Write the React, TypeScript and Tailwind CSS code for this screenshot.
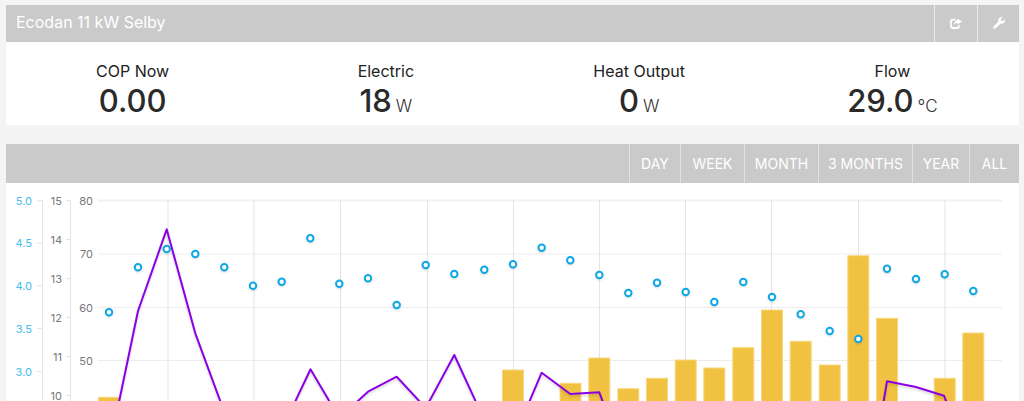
import { FaWrench } from "react-icons/fa";

const font = { fontFamily: '"Inter", "Open Sans", sans-serif' };

const stats = [
  { label: "COP Now", value: "0.00", unit: "" },
  { label: "Electric", value: "18", unit: "W" },
  { label: "Heat Output", value: "0", unit: "W" },
  { label: "Flow", value: "29.0", unit: "°C" },
];

const ranges = [
  { label: "DAY", w: "w-[51px]" },
  { label: "WEEK", w: "w-[64px]" },
  { label: "MONTH", w: "w-[74px]" },
  { label: "3 MONTHS", w: "w-[94px]" },
  { label: "YEAR", w: "w-[57px]" },
  { label: "ALL", w: "w-[50px]" },
];

const dots = [
  [109, 312.3], [138, 267.3], [166.7, 249], [195.3, 254], [224.3, 267.3], [253, 285.7],
  [281.7, 281.7], [310.3, 238.3], [339.3, 283.7], [368, 278.3], [396.7, 305], [425.7, 265],
  [454.3, 274], [484.3, 269.7], [513, 264.3], [541.7, 247.7], [570.3, 260.3], [599.3, 275],
  [628.3, 293], [657, 282.7], [685.7, 292], [714.3, 302], [743.3, 282], [772, 297],
  [800.7, 314.3], [829.7, 331], [858.3, 339], [887, 268.7], [916, 279], [944.7, 274.3], [973.3, 291],
];

const bars = [
  [109, 397.3], [513, 370], [570.5, 383.3], [599.3, 358], [628.3, 388.7], [657, 378.3],
  [685.7, 360], [714.3, 368], [743.3, 347.7], [772, 310], [800.7, 341.3], [829.7, 365],
  [858.3, 255.7], [887, 318.3], [944.7, 378.3], [973.3, 333],
];

const purple =
  "109,450 138,311 166.7,229.3 195.3,333.3 224.3,412 253,450 281.7,430 310.5,369.3 339.3,418 368,391.7 396.7,376.7 425.7,408 454.3,355 484.3,420 513,440 541.7,372.7 570.3,394 599.3,392.3 628.3,470";
const purple2 = "872,470 887,381.3 916,387 944,395.7 973,470";

const vLines = [168, 254, 340.5, 427.5, 513.5, 599.5, 685.5, 771.5, 858.5, 945];
const hLines = [254, 307.5, 360.5];

const axisA = [["5.0", 200.7], ["4.5", 243.3], ["4.0", 286], ["3.5", 328.5], ["3.0", 371.5]] as const;
const axisB = [["15", 200.7], ["14", 239.5], ["13", 278.5], ["12", 317.5], ["11", 356.5], ["10", 395.5]] as const;
const axisC = [["80", 200.7], ["70", 254], ["60", 307.5], ["50", 360.5]] as const;

function ShareIcon() {
  return (
    <svg viewBox="0 0 12 11" className="h-[11px] w-[12px]">
      <path
        d="M5.5 1.6H3A2 2 0 0 0 1 3.6V8A2 2 0 0 0 3 10H7A2 2 0 0 0 9 8V7.2"
        fill="none"
        stroke="#ffffff"
        strokeWidth="1.8"
      />
      <path d="M7.5 0.5L12 3.5L7.5 6.5V5C5.8 5 4.8 5.6 4.2 7C4.2 4.2 5.6 2.3 7.5 2Z" fill="#ffffff" />
    </svg>
  );
}

function Chart() {
  return (
    <svg viewBox="6 183 1013 218" className="block h-[218px] w-full" style={font}>
      {/* grid */}
      <line x1="98" x2="1002" y1="200.5" y2="200.5" stroke="#f1f1f1" strokeWidth="2" />
      {hLines.map((y) => (
        <line key={y} x1="98" x2="1002" y1={y} y2={y} stroke="#ededed" />
      ))}
      {vLines.map((x) => (
        <line key={x} x1={x} x2={x} y1="200" y2="401" stroke="#e4e4e4" />
      ))}

      {/* axes */}
      <line x1="42.5" x2="42.5" y1="200" y2="401" stroke="#e4e4e4" />
      <line x1="70.5" x2="70.5" y1="200" y2="401" stroke="#e4e4e4" />
      {axisA.map(([t, y]) => (
        <g key={t}>
          <line x1="37" x2="42" y1={y} y2={y} stroke="#e4e4e4" />
          <text x="32" y={y + 4} textAnchor="end" fontSize="11" fill="#45bdec">{t}</text>
        </g>
      ))}
      {axisB.map(([t, y]) => (
        <g key={t}>
          <line x1="66" x2="70" y1={y} y2={y} stroke="#e4e4e4" />
          <text x="62" y={y + 4} textAnchor="end" fontSize="11" fill="#777777">{t}</text>
        </g>
      ))}
      {axisC.map(([t, y]) => (
        <text key={t} x="93" y={y + 4} textAnchor="end" fontSize="11" fill="#777777">{t}</text>
      ))}

      {/* bars */}
      {bars.map(([x, y]) => (
        <rect key={x} x={x - 10.5} y={y} width="21" height={420 - y} fill="#f1c242" stroke="#f8d77e" strokeWidth="1" />
      ))}

      {/* power line */}
      <g className="drop-shadow-[0_2px_1px_rgba(0,0,0,0.15)]" fill="none" stroke="#8a00e6" strokeWidth="2" strokeLinejoin="round">
        <polyline points={purple} />
        <polyline points={purple2} />
      </g>

      {/* cop dots */}
      {dots.map(([x, y]) => (
        <circle
          key={x}
          cx={x}
          cy={y}
          r="3.2"
          fill="#ffffff"
          stroke="#0ea8e6"
          strokeWidth="2"
          className="drop-shadow-[0_1px_1px_rgba(0,0,0,0.15)]"
        />
      ))}
    </svg>
  );
}

export default function App() {
  return (
    <div className="h-screen overflow-hidden bg-[#f4f4f4] pl-[6px] pr-[5px] pt-[5px]" style={font}>
      <div className="flex h-[37px] items-center bg-[#cacaca] text-white">
        <div className="flex-1 pb-[3px] pl-[10px] text-[16px]">Ecodan 11 kW Selby</div>
        <div className="flex h-full w-[43px] items-center justify-center border-l border-[#ececec] pb-[1px]">
          <ShareIcon />
        </div>
        <div className="flex h-full w-[42px] items-center justify-center border-l border-[#ececec] pb-[1px]">
          <FaWrench size={12} />
        </div>
      </div>

      <div className="grid h-[83px] grid-cols-4 bg-white text-[#222222]">
        {stats.map((s) => (
          <div key={s.label} className="flex flex-col items-center pt-[19px]">
            <div className="text-[16px] leading-[21px]">{s.label}</div>
            <div className="flex items-baseline leading-[37px]">
              <span className="text-[31px] font-medium text-[#2a2a2a]">{s.value}</span>
              {s.unit && <span className="ml-[4px] text-[17px] font-light text-[#333333]">{s.unit}</span>}
            </div>
          </div>
        ))}
      </div>

      <div className="mt-[19px] flex h-[39px] items-center justify-end bg-[#cacaca] text-white">
        {ranges.map((r) => (
          <div key={r.label} className={`flex h-full items-center justify-center border-l border-[#e2e2e2] pb-[1px] text-[14px] ${r.w}`}>
            {r.label}
          </div>
        ))}
      </div>

      <div className="bg-white">
        <Chart />
      </div>
    </div>
  );
}
